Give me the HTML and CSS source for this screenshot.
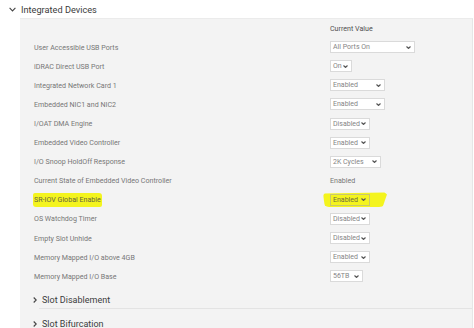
FILE: index.html
```html
<!DOCTYPE html>
<html lang="en">
<head>
    <meta charset="UTF-8">
    <meta name="viewport" content="width=device-width, initial-scale=1.0">
    <title>Integrated Devices</title>
    <link rel="stylesheet" href="styles.css">
</head>
<body>
	<div class="section">
		<div class="section-head">
			<svg class="chev-down" width="7" height="5" viewBox="0 0 7 5"><path d="M0.6 0.9 L3.5 3.9 L6.4 0.9"/></svg>
			<span class="section-title">Integrated Devices</span>
		</div>
		<div class="panel">
			<div class="row head"><span></span><span class="col-head">Current Value</span></div>
			<div class="row">
				<span class="label">User Accessible USB Ports</span>
				<span><span class="sel w85">All Ports On<svg class="caret" width="5" height="3" viewBox="0 0 5 3"><path d="M0.5 0.5 L2.5 2.4 L4.5 0.5"/></svg></span></span>
			</div>
			<div class="row">
				<span class="label">iDRAC Direct USB Port</span>
				<span><span class="sel w22">On<svg class="caret" width="5" height="3" viewBox="0 0 5 3"><path d="M0.5 0.5 L2.5 2.4 L4.5 0.5"/></svg></span></span>
			</div>
			<div class="row">
				<span class="label">Integrated Network Card 1</span>
				<span><span class="sel w55">Enabled<svg class="caret" width="5" height="3" viewBox="0 0 5 3"><path d="M0.5 0.5 L2.5 2.4 L4.5 0.5"/></svg></span></span>
			</div>
			<div class="row">
				<span class="label">Embedded NIC1 and NIC2</span>
				<span><span class="sel w55">Enabled<svg class="caret" width="5" height="3" viewBox="0 0 5 3"><path d="M0.5 0.5 L2.5 2.4 L4.5 0.5"/></svg></span></span>
			</div>
			<div class="row">
				<span class="label">I/OAT DMA Engine</span>
				<span><span class="sel w40">Disabled<svg class="caret" width="5" height="3" viewBox="0 0 5 3"><path d="M0.5 0.5 L2.5 2.4 L4.5 0.5"/></svg></span></span>
			</div>
			<div class="row">
				<span class="label">Embedded Video Controller</span>
				<span><span class="sel w40">Enabled<svg class="caret" width="5" height="3" viewBox="0 0 5 3"><path d="M0.5 0.5 L2.5 2.4 L4.5 0.5"/></svg></span></span>
			</div>
			<div class="row">
				<span class="label">I/O Snoop HoldOff Response</span>
				<span><span class="sel w51">2K Cycles<svg class="caret" width="5" height="3" viewBox="0 0 5 3"><path d="M0.5 0.5 L2.5 2.4 L4.5 0.5"/></svg></span></span>
			</div>
			<div class="row">
				<span class="label">Current State of Embedded Video Controller</span>
				<span class="plain">Enabled</span>
			</div>
			<div class="row">
				<span class="label"><span class="hl">SR-IOV Global Enable</span></span>
				<span><span class="hl-mark"><span class="sel w40 on-hl">Enabled<svg class="caret" width="5" height="3" viewBox="0 0 5 3"><path d="M0.5 0.5 L2.5 2.4 L4.5 0.5"/></svg></span></span></span>
			</div>
			<div class="row">
				<span class="label">OS Watchdog Timer</span>
				<span><span class="sel w40">Disabled<svg class="caret" width="5" height="3" viewBox="0 0 5 3"><path d="M0.5 0.5 L2.5 2.4 L4.5 0.5"/></svg></span></span>
			</div>
			<div class="row">
				<span class="label">Empty Slot Unhide</span>
				<span><span class="sel w40">Disabled<svg class="caret" width="5" height="3" viewBox="0 0 5 3"><path d="M0.5 0.5 L2.5 2.4 L4.5 0.5"/></svg></span></span>
			</div>
			<div class="row">
				<span class="label">Memory Mapped I/O above 4GB</span>
				<span><span class="sel w40">Enabled<svg class="caret" width="5" height="3" viewBox="0 0 5 3"><path d="M0.5 0.5 L2.5 2.4 L4.5 0.5"/></svg></span></span>
			</div>
			<div class="row">
				<span class="label">Memory Mapped I/O Base</span>
				<span><span class="sel w33">56TB<svg class="caret" width="5" height="3" viewBox="0 0 5 3"><path d="M0.5 0.5 L2.5 2.4 L4.5 0.5"/></svg></span></span>
			</div>

			<div class="sub first">
				<svg class="chev-right" width="4" height="6" viewBox="0 0 4 6"><path d="M0.7 0.5 L3.2 3 L0.7 5.5"/></svg>
				<div class="sub-title">Slot Disablement</div>
			</div>
			<div class="sub">
				<svg class="chev-right" width="4" height="6" viewBox="0 0 4 6"><path d="M0.7 0.5 L3.2 3 L0.7 5.5"/></svg>
				<div class="sub-title">Slot Bifurcation</div>
			</div>
		</div>
	</div>
</body>
</html>
```

FILE: styles.css
```css
body { margin: 0; background: #fff; font-family: Roboto, "Liberation Sans", Arial, sans-serif; overflow: hidden; }

.section-head { display: flex; align-items: center; height: 18px; padding-left: 9px; }
.chev-down { fill: none; stroke: #444; stroke-width: 1.1; margin-right: 5px; margin-top: 1px; }
.section-title { font-size: 9.2px; color: #3c3c3c; }

.panel { margin-left: 20px; margin-right: 1px; background: #f3f3f3; border-top: 1px solid #ebebeb; border-right: 1px solid #e6e6e6; padding-left: 14px; height: 320px; }

.row { display: grid; grid-template-columns: 296px 1fr; height: 19.1px; align-items: center; font-size: 7.1px; }
.row.head { margin-top: -0.5px; }
.label { color: #777; white-space: nowrap; }
.col-head { color: #505050; }
.plain { color: #777; }

.sel { display: inline-flex; align-items: center; justify-content: space-between; box-sizing: border-box; height: 12px; padding: 0 3px 0 2px; border: 1px solid #dadada; background: #fff; color: #858585; font-size: 7px; vertical-align: middle; }
.caret { fill: none; stroke: #555; stroke-width: 1.2; flex: none; }
.w22 { width: 22px; }
.w33 { width: 33px; }
.w40 { width: 40px; }
.w51 { width: 51px; }
.w55 { width: 55px; }
.w85 { width: 85px; }

.hl { display: inline-block; background: #f4f41e; line-height: 14px; padding: 0 1px; margin-left: -1px; border-radius: 2px 3px 2px 3px; color: #66663f; }
.hl-mark { display: inline-flex; align-items: center; height: 15px; margin-left: -7px; padding: 0 17px 0 7px; background: #f4f41e; border-radius: 5px 3px 8px 6px; clip-path: polygon(0 8%, 96% 0, 100% 12%, 93% 100%, 3% 100%); vertical-align: middle; }
.sel.on-hl { background: transparent; border-color: #c9c96a; color: #6c6c40; }

.sub { display: flex; align-items: center; margin-top: 7px; }
.sub.first { margin-top: 6px; }
.chev-right { fill: none; stroke: #444; stroke-width: 1.1; margin-right: 2px; margin-left: -1px; }
.sub-title { flex: 1; font-size: 9px; color: #3c3c3c; padding-left: 3px; height: 16px; line-height: 16px; }
.sub.first .sub-title { border-bottom: 1px solid #e3e3e3; }
```
